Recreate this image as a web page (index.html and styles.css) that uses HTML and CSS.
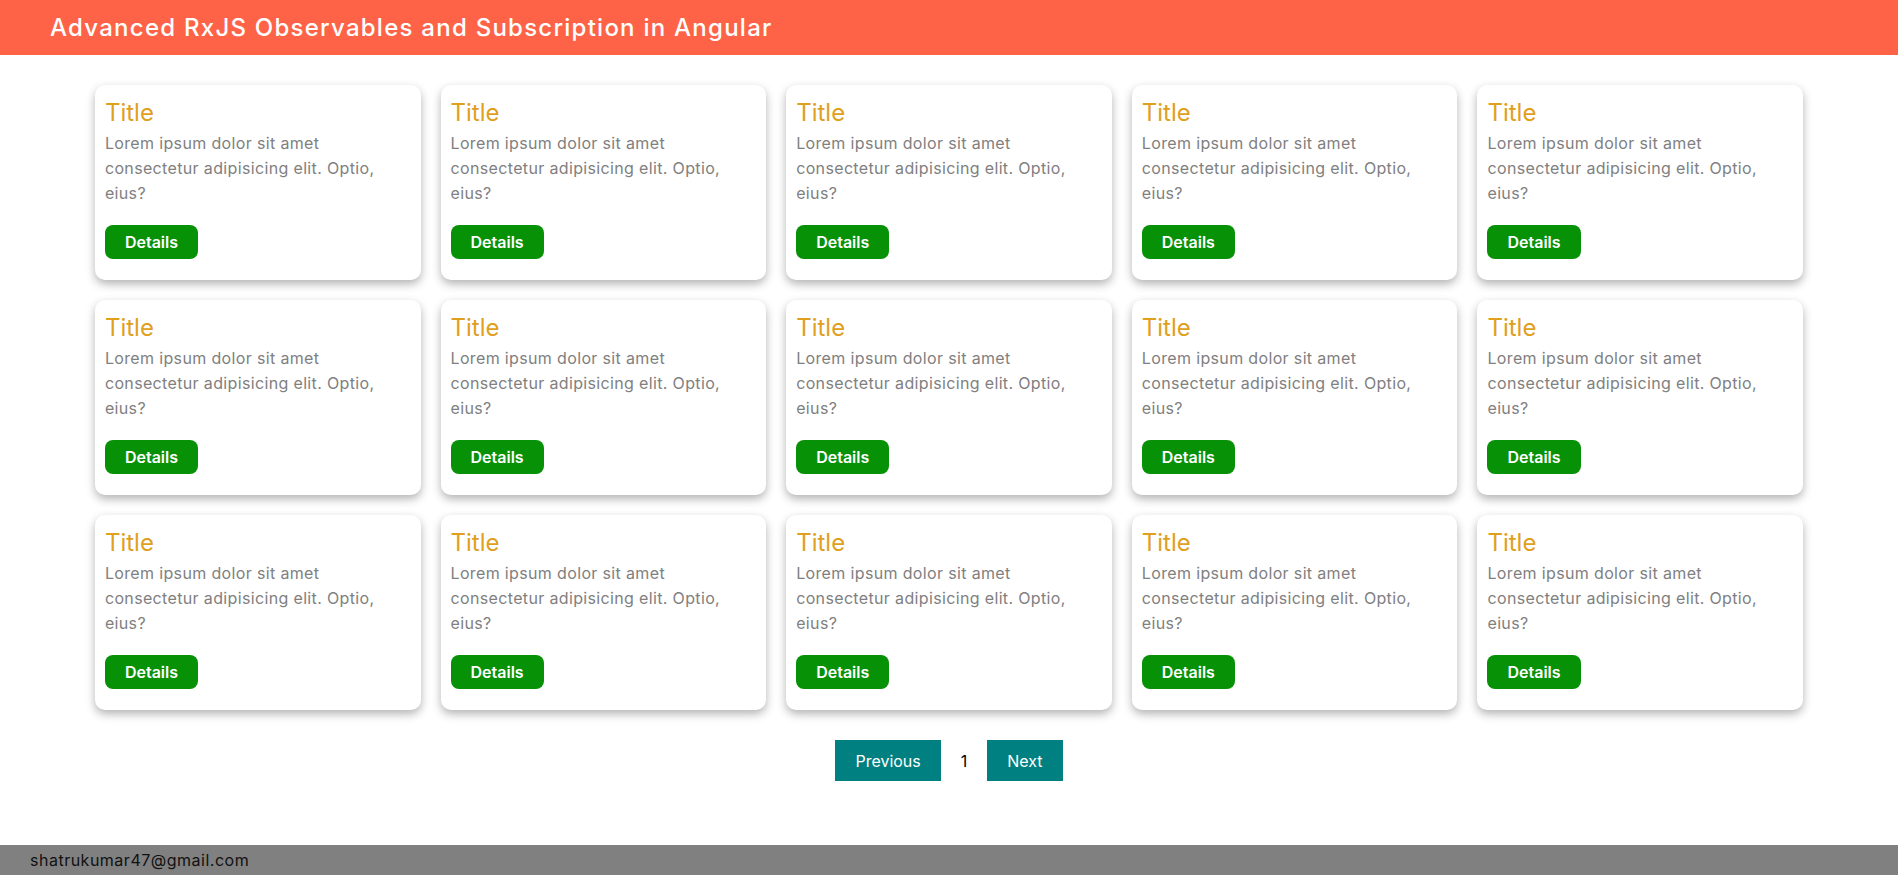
FILE: index.html
```html
<!DOCTYPE html>
<html lang="en">
<head>
<meta charset="utf-8">
<title>Advanced RxJS Observables and Subscription in Angular</title>
<link rel="stylesheet" href="styles.css">
</head>
<body>
<header class="topbar">
  <h1 class="topbar-title">Advanced RxJS Observables and Subscription in Angular</h1>
</header>
<main class="content">
  <section class="card-grid">
    <article class="card"><h2 class="card-title">Title</h2><p class="card-text">Lorem ipsum dolor sit amet consectetur adipisicing elit. Optio, eius?</p><button class="card-btn">Details</button></article>
    <article class="card"><h2 class="card-title">Title</h2><p class="card-text">Lorem ipsum dolor sit amet consectetur adipisicing elit. Optio, eius?</p><button class="card-btn">Details</button></article>
    <article class="card"><h2 class="card-title">Title</h2><p class="card-text">Lorem ipsum dolor sit amet consectetur adipisicing elit. Optio, eius?</p><button class="card-btn">Details</button></article>
    <article class="card"><h2 class="card-title">Title</h2><p class="card-text">Lorem ipsum dolor sit amet consectetur adipisicing elit. Optio, eius?</p><button class="card-btn">Details</button></article>
    <article class="card"><h2 class="card-title">Title</h2><p class="card-text">Lorem ipsum dolor sit amet consectetur adipisicing elit. Optio, eius?</p><button class="card-btn">Details</button></article>
    <article class="card"><h2 class="card-title">Title</h2><p class="card-text">Lorem ipsum dolor sit amet consectetur adipisicing elit. Optio, eius?</p><button class="card-btn">Details</button></article>
    <article class="card"><h2 class="card-title">Title</h2><p class="card-text">Lorem ipsum dolor sit amet consectetur adipisicing elit. Optio, eius?</p><button class="card-btn">Details</button></article>
    <article class="card"><h2 class="card-title">Title</h2><p class="card-text">Lorem ipsum dolor sit amet consectetur adipisicing elit. Optio, eius?</p><button class="card-btn">Details</button></article>
    <article class="card"><h2 class="card-title">Title</h2><p class="card-text">Lorem ipsum dolor sit amet consectetur adipisicing elit. Optio, eius?</p><button class="card-btn">Details</button></article>
    <article class="card"><h2 class="card-title">Title</h2><p class="card-text">Lorem ipsum dolor sit amet consectetur adipisicing elit. Optio, eius?</p><button class="card-btn">Details</button></article>
    <article class="card"><h2 class="card-title">Title</h2><p class="card-text">Lorem ipsum dolor sit amet consectetur adipisicing elit. Optio, eius?</p><button class="card-btn">Details</button></article>
    <article class="card"><h2 class="card-title">Title</h2><p class="card-text">Lorem ipsum dolor sit amet consectetur adipisicing elit. Optio, eius?</p><button class="card-btn">Details</button></article>
    <article class="card"><h2 class="card-title">Title</h2><p class="card-text">Lorem ipsum dolor sit amet consectetur adipisicing elit. Optio, eius?</p><button class="card-btn">Details</button></article>
    <article class="card"><h2 class="card-title">Title</h2><p class="card-text">Lorem ipsum dolor sit amet consectetur adipisicing elit. Optio, eius?</p><button class="card-btn">Details</button></article>
    <article class="card"><h2 class="card-title">Title</h2><p class="card-text">Lorem ipsum dolor sit amet consectetur adipisicing elit. Optio, eius?</p><button class="card-btn">Details</button></article>
  </section>
  <nav class="pager">
    <button class="pager-btn">Previous</button>
    <span class="pager-num">1</span>
    <button class="pager-btn">Next</button>
  </nav>
</main>
<footer class="footer">shatrukumar47@gmail.com</footer>
</body>
</html>
```
FILE: styles.css
```css
* {
  box-sizing: border-box;
}

html,
body {
  height: 100%;
}

body {
  margin: 0;
  min-height: 100vh;
  display: flex;
  flex-direction: column;
  font-family: Inter, "Open Sans", sans-serif;
  background: #ffffff;
}

.topbar {
  background: #ff6347;
  height: 55px;
  display: flex;
  align-items: center;
  padding-left: 50px;
  flex-shrink: 0;
}

.topbar-title {
  margin: 0;
  color: #ffffff;
  font-size: 24px;
  font-weight: 500;
  line-height: 1;
  letter-spacing: 1.25px;
}

.content {
  flex: 1;
  padding-top: 30px;
}

.card-grid {
  width: 90%;
  margin: 0 auto;
  display: grid;
  grid-template-columns: repeat(5, 1fr);
  gap: 20px;
}

.card {
  background: #ffffff;
  border-radius: 10px;
  box-shadow: 0 4px 10px rgba(0, 0, 0, 0.3);
  padding: 10px 10px 21px;
}

.card-title {
  margin: 0;
  font-size: 24px;
  line-height: 36px;
  font-weight: 400;
  color: #dfa01e;
}

.card-text {
  margin: 0 0 19px;
  color: #808080;
  font-size: 16px;
  line-height: 25px;
  letter-spacing: 0.35px;
}

.card-btn {
  display: block;
  background: #079107;
  color: #ffffff;
  border: none;
  border-radius: 8px;
  padding: 5px 20px;
  font-family: inherit;
  font-size: 16px;
  line-height: 24px;
  font-weight: 600;
}

.pager {
  display: flex;
  justify-content: center;
  align-items: center;
  margin-top: 30px;
}

.pager-btn {
  background: #008080;
  color: #ffffff;
  border: none;
  padding: 8.5px 20px;
  font-family: inherit;
  font-size: 16px;
  line-height: 24px;
}

.pager-num {
  padding: 0 20px;
  font-size: 16px;
  color: #000000;
}

.footer {
  flex-shrink: 0;
  background: #808080;
  height: 30px;
  line-height: 30px;
  padding-left: 30px;
  font-size: 16px;
  letter-spacing: 0.5px;
  color: #111111;
}
```
